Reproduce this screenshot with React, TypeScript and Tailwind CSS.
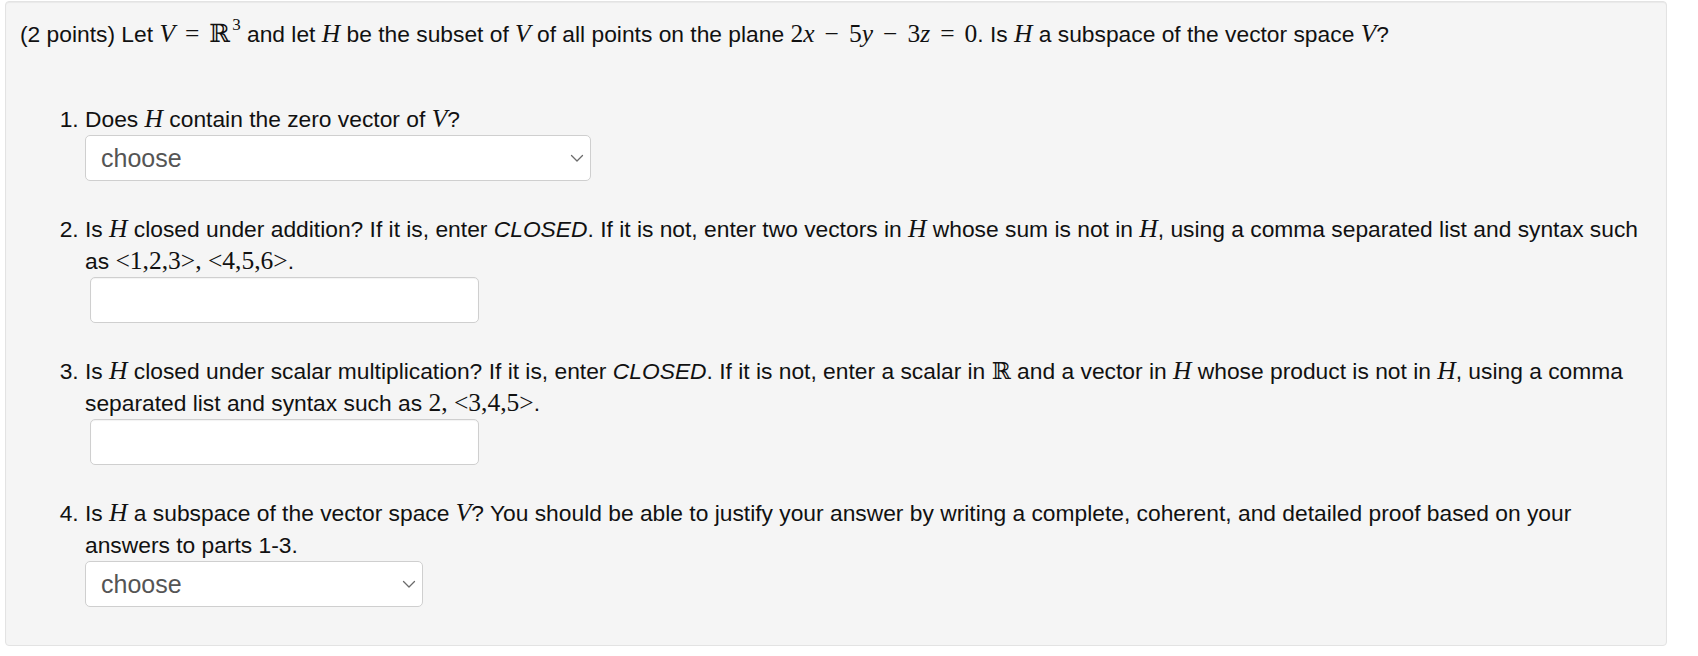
import React from 'react';

// math helpers: italic variables and upright numbers in a TeX-like serif
const serif = "font-['Liberation_Serif','DejaVu_Serif',serif]";

function V({ children }: { children: React.ReactNode }) {
  return <span className={`${serif} italic text-[25.5px]`}>{children}</span>;
}

function N({ children }: { children: React.ReactNode }) {
  return <span className={`${serif} text-[25.5px]`}>{children}</span>;
}

// relation / binary operator with TeX-ish spacing
function Op({ children }: { children: React.ReactNode }) {
  return <span className={`${serif} text-[25.5px] mx-[10px]`}>{children}</span>;
}

function Reals({ big }: { big?: boolean }) {
  return <span className={`font-['DejaVu_Serif',serif] ${big ? 'text-[25px]' : 'text-[23px]'}`}>ℝ</span>;
}

function Chevron() {
  return (
    <svg width="14" height="9" viewBox="0 0 14 9" fill="none" className="shrink-0">
      <path d="M1.5 1.5l5.5 5.5 5.5-5.5" stroke="#6b6b6b" strokeWidth="1.3" strokeLinecap="round" strokeLinejoin="round" />
    </svg>
  );
}

function ChooseSelect({ width }: { width: string }) {
  return (
    <div
      className={`${width} h-[46px] bg-white border border-[#cfcfcf] rounded-[5px] flex items-center justify-between pl-[15px] pr-[6px]`}
    >
      <span className="text-[25px] text-[#555]">choose</span>
      <Chevron />
    </div>
  );
}

function AnswerBox() {
  return (
    <div className="ml-[5px] w-[389px] h-[46px] bg-white border border-[#cfcfcf] rounded-[5px] shadow-[inset_0_1px_1px_rgba(0,0,0,0.05)]" />
  );
}

export default function App() {
  return (
    <div className="min-h-screen bg-white pt-[1px] pl-[5px] font-['Liberation_Sans',Arial,sans-serif] text-[#111]">
      <div className="w-[1662px] h-[645px] bg-[#f5f5f5] border border-[#e3e3e3] rounded-[4px] shadow-[inset_0_1px_1px_rgba(0,0,0,0.05)] pl-[14px] pt-[16px] pr-[4px] text-[22.8px] leading-[32px]">
        <p>
          (2 points) Let <V>V</V>
          <Op>=</Op>
          <Reals big />
          <sup className={`${serif} text-[17px] relative -top-[12px] ml-[2px]`}>3</sup> and let <V>H</V> be the subset of{' '}
          <V>V</V> of all points on the plane <N>2</N>
          <V>x</V>
          <Op>−</Op>
          <N>5</N>
          <V>y</V>
          <Op>−</Op>
          <N>3</N>
          <V>z</V>
          <Op>=</Op>
          <N>0</N>. Is <V>H</V> a subspace of the vector space <V>V</V>?
        </p>

        <ol className="list-decimal list-outside pl-[65px] mt-[53px]">
          <li>
            <div>
              Does <V>H</V> contain the zero vector of <V>V</V>?
            </div>
            <ChooseSelect width="w-[506px]" />
          </li>

          <li className="mt-[32px]">
            <div>
              Is <V>H</V> closed under addition? If it is, enter <i>CLOSED</i>. If it is not, enter two vectors in{' '}
              <V>H</V> whose sum is not in <V>H</V>, using a comma separated list and syntax such
              <br />
              as <N>&lt;1,2,3&gt;, &lt;4,5,6&gt;</N>.
            </div>
            <AnswerBox />
          </li>

          <li className="mt-[32px]">
            <div>
              Is <V>H</V> closed under scalar multiplication? If it is, enter <i>CLOSED</i>. If it is not, enter a
              scalar in <Reals /> and a vector in <V>H</V> whose product is not in <V>H</V>, using a comma
              <br />
              separated list and syntax such as <N>2, &lt;3,4,5&gt;</N>.
            </div>
            <AnswerBox />
          </li>

          <li className="mt-[32px]">
            <div>
              Is <V>H</V> a subspace of the vector space <V>V</V>? You should be able to justify your answer by
              writing a complete, coherent, and detailed proof based on your
              <br />
              answers to parts 1-3.
            </div>
            <ChooseSelect width="w-[338px]" />
          </li>
        </ol>
      </div>
    </div>
  );
}
